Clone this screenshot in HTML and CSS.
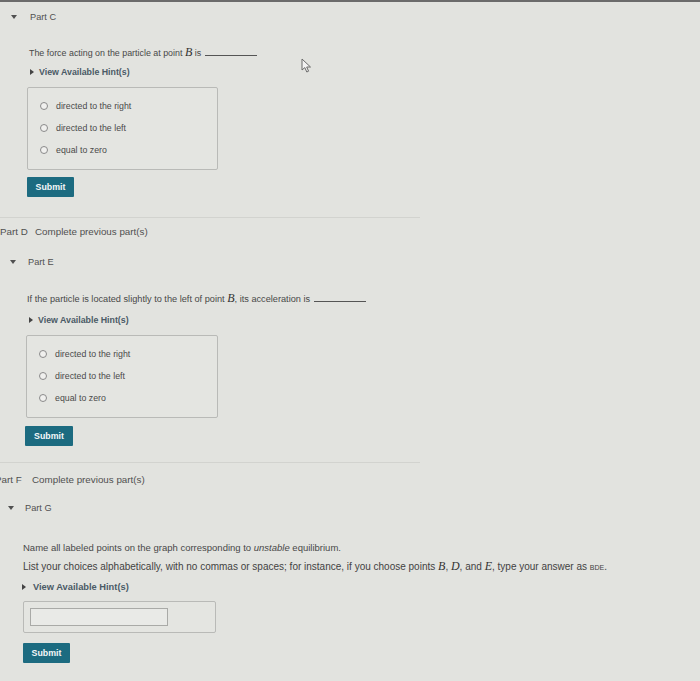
FILE: index.html
```html
<!DOCTYPE html>
<html>
<head>
<meta charset="utf-8">
<link rel="stylesheet" href="styles.css">
</head>
<body>
<div class="topbar"></div>
<div class="page">

  <div class="part-head ph-c"><span class="tri-down"></span><span class="pname">Part C</span></div>
  <p class="q q-c">The force acting on the particle at point <i class="m">B</i> is <span class="blank"></span></p>
  <div class="hint h-c"><span class="tri-right"></span>View Available Hint(s)</div>
  <div class="box box-c">
    <div class="opt"><span class="radio"></span>directed to the right</div>
    <div class="opt"><span class="radio"></span>directed to the left</div>
    <div class="opt"><span class="radio"></span>equal to zero</div>
  </div>
  <div class="submit s-c">Submit</div>

  <div class="sep sep-1"></div>
  <div class="locked l-d"><span class="lname">Part D</span><span>Complete previous part(s)</span></div>

  <div class="part-head ph-e"><span class="tri-down"></span><span class="pname">Part E</span></div>
  <p class="q q-e">If the particle is located slightly to the left of point <i class="m">B</i>, its acceleration is <span class="blank"></span></p>
  <div class="hint h-e"><span class="tri-right"></span>View Available Hint(s)</div>
  <div class="box box-e">
    <div class="opt"><span class="radio"></span>directed to the right</div>
    <div class="opt"><span class="radio"></span>directed to the left</div>
    <div class="opt"><span class="radio"></span>equal to zero</div>
  </div>
  <div class="submit s-e">Submit</div>

  <div class="sep sep-2"></div>
  <div class="locked l-f"><span class="lname">Part F</span><span>Complete previous part(s)</span></div>

  <div class="part-head ph-g"><span class="tri-down"></span><span class="pname">Part G</span></div>
  <p class="q q-g1">Name all labeled points on the graph corresponding to <i>unstable</i> equilibrium.</p>
  <p class="q q-g2">List your choices alphabetically, with no commas or spaces; for instance, if you choose points <i class="m">B</i>, <i class="m">D</i>, and <i class="m">E</i>, type your answer as <span class="sc">BDE</span>.</p>
  <div class="hint h-g"><span class="tri-right"></span>View Available Hint(s)</div>
  <div class="box box-g"><div class="input"></div></div>
  <div class="submit s-g">Submit</div>

</div>
<svg class="cursor" width="12" height="16" viewBox="0 0 12 16"><path d="M1 1 L1 12 L3.8 9.6 L5.8 14 L7.6 13.2 L5.7 9 L9.5 9 Z" fill="#f2f2f2" stroke="#6a6a6a" stroke-width="1" stroke-linejoin="round"/></svg>
</body>
</html>
```
FILE: styles.css
```css
html, body {
  margin: 0;
  padding: 0;
}
body {
  width: 700px;
  height: 681px;
  overflow: hidden;
  background: #e2e3df;
  font-family: "Liberation Sans", Arial, sans-serif;
  color: #464646;
  position: relative;
}
.topbar {
  height: 2px;
  background: #6b6b6b;
}
.page {
  display: flex;
  flex-direction: column;
  align-items: flex-start;
}
p { margin: 0; }

.part-head {
  display: flex;
  align-items: center;
  height: 12px;
  font-size: 9.2px;
  color: #505050;
}
.tri-down {
  width: 0; height: 0;
  border-left: 3px solid transparent;
  border-right: 3px solid transparent;
  border-top: 4px solid #505050;
}
.ph-c { margin-top: 9px; margin-left: 11px; }
.ph-c .pname { margin-left: 13px; }
.ph-e { margin-top: 19px; margin-left: 10px; }
.ph-e .pname { margin-left: 12px; }
.ph-g { margin-top: 17px; margin-left: 8px; }
.ph-g .pname { margin-left: 11px; }

.q {
  height: 12px;
  line-height: 12px;
  font-size: 8.9px;
  color: #484848;
  white-space: nowrap;
}
.m {
  font-family: "Liberation Serif", "Times New Roman", serif;
  font-style: italic;
  font-size: 12px;
  color: #333;
}
.blank {
  display: inline-block;
  width: 52px;
  border-bottom: 1px solid #555;
  margin-left: 1px;
}
.sc { font-size: 7px; }
.q-c { margin-top: 23px; margin-left: 29px; }
.q-e { margin-top: 24px; margin-left: 27px; font-size: 9.2px; }
.q-g1 { margin-top: 28px; margin-left: 23px; font-size: 9.5px; }
.q-g2 { margin-top: 6px; margin-left: 23px; font-size: 10px; color: #424242; }

.hint {
  display: flex;
  align-items: center;
  height: 12px;
  font-size: 8.8px;
  font-weight: bold;
  color: #4a5a66;
}
.tri-right {
  width: 0; height: 0;
  border-top: 3px solid transparent;
  border-bottom: 3px solid transparent;
  border-left: 4px solid #444;
  margin-right: 5px;
}
.h-c { margin-top: 8px; margin-left: 30px; }
.h-e { margin-top: 10px; margin-left: 29px; }
.h-g { margin-top: 9px; margin-left: 22px; font-size: 9.3px; }
.h-g .tri-right { margin-right: 7px; }

.box {
  box-sizing: border-box;
  border: 1px solid #b9bab7;
  border-radius: 2px;
  background: #e4e5e1;
  display: flex;
  flex-direction: column;
}
.box-c { margin-top: 9px; margin-left: 27px; width: 191px; height: 83px; padding-top: 7px; }
.box-e { margin-top: 9px; margin-left: 26px; width: 192px; height: 83px; padding-top: 7px; }
.box-g { margin-top: 8px; margin-left: 23px; width: 193px; height: 32px; padding: 6px 0 0 6px; }

.opt {
  display: flex;
  align-items: center;
  height: 22px;
  font-size: 8.8px;
  color: #4a4a4a;
  padding-left: 12px;
}
.radio {
  box-sizing: border-box;
  width: 8px;
  height: 8px;
  border: 1px solid #8a8a8a;
  border-radius: 50%;
  background: #f0f0ee;
  margin-right: 8px;
}
.input {
  box-sizing: border-box;
  width: 138px;
  height: 18px;
  border: 1px solid #a9aaa7;
  background: #e9eae7;
}

.submit {
  box-sizing: border-box;
  height: 20px;
  background: #1c6b80;
  color: #f4f7f8;
  font-size: 8.8px;
  font-weight: bold;
  display: flex;
  align-items: center;
  justify-content: center;
  border-radius: 1px;
}
.s-c { margin-top: 7px; margin-left: 27px; width: 47px; }
.s-e { margin-top: 8px; margin-left: 25px; width: 48px; }
.s-g { margin-top: 10px; margin-left: 23px; width: 47px; }

.sep {
  height: 1px;
  width: 420px;
  background: #d2d3cf;
}
.sep-1 { margin-top: 20px; }
.sep-2 { margin-top: 16px; }

.locked {
  display: flex;
  align-items: center;
  height: 12px;
  font-size: 9.8px;
  color: #505050;
  white-space: nowrap;
}
.l-d { margin-top: 7px; margin-left: 0; }
.l-d .lname { width: 35px; }
.l-f { margin-top: 10px; margin-left: -5px; }
.l-f .lname { width: 37px; }

.cursor {
  position: absolute;
  left: 301px;
  top: 58px;
}
```
